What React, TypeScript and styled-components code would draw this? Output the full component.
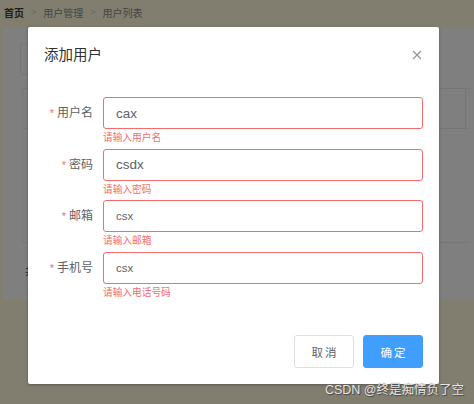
import React from 'react';
import styled, { createGlobalStyle } from 'styled-components';

const GlobalStyle = createGlobalStyle`
  html, body {
    margin: 0;
    padding: 0;
    background: #817d6f;
    font-family: "Helvetica Neue", "Liberation Sans", "Noto Sans CJK SC", sans-serif;
  }
`;

const Page = styled.div`
  position: relative;
  width: 474px;
  height: 404px;
  overflow: hidden;
`;

const Breadcrumb = styled.div`
  height: 28px;
  display: flex;
  align-items: center;
  gap: 7px;
  padding: 0 0 4px 4px;
  box-sizing: border-box;
  font-size: 10px;
  color: #3b3b3b;
`;

const Crumb = styled.span<{ strong?: boolean }>`
  font-weight: ${({ strong }) => (strong ? 700 : 400)};
  color: ${({ strong }) => (strong ? '#1e1e1e' : '#454545')};
`;

const Sep = styled.span`
  color: #6a6a6a;
  font-size: 9px;
`;

const Card = styled.div`
  margin-left: 3px;
  height: 272px;
  background: #7f7f7f;
  padding: 15px 0 0 17px;
  box-sizing: border-box;
`;

const SearchBox = styled.div`
  width: 260px;
  height: 32px;
  border: 1px solid #767676;
  border-radius: 3px;
  box-sizing: border-box;
`;

const Table = styled.div`
  margin: 13px 0 0 2px;
  width: 448px;
  height: 155px;
  border-top: 1px solid #777;
  border-bottom: 1px solid #777;
  border-left: 1px solid #7a7a7a;
  box-sizing: border-box;
`;

const TableHead = styled.div`
  height: 39px;
  border-bottom: 1px solid #777;
  display: flex;
  justify-content: flex-end;
`;

const HeadCell = styled.div`
  width: 4px;
  border-left: 1px solid #777;
`;

const Pager = styled.div`
  margin: 20px 0 0 5px;
  font-size: 10px;
  color: #262626;
`;

const Dialog = styled.div`
  position: absolute;
  left: 28px;
  top: 27px;
  width: 411px;
  height: 357px;
  background: #fff;
  border-radius: 2px;
  box-shadow: 0 1px 3px rgba(0, 0, 0, 0.3);
  display: flex;
  flex-direction: column;
`;

const Header = styled.div`
  padding: 18px 16px 8px;
  display: flex;
  align-items: center;
  justify-content: space-between;
`;

const Title = styled.span`
  font-size: 14.5px;
  line-height: 20px;
  color: #303133;
`;

const Close = styled.button`
  border: none;
  background: none;
  padding: 0;
  width: 10px;
  height: 10px;
  display: flex;
  margin-right: 1px;
  cursor: pointer;
`;

const Body = styled.div`
  padding: 24px 16px 0;
`;

const Row = styled.div`
  display: flex;
`;

const Label = styled.label`
  width: 59px;
  flex: none;
  padding-right: 10px;
  box-sizing: border-box;
  text-align: right;
  line-height: 32px;
  font-size: 12px;
  color: #606266;
  white-space: nowrap;
`;

const Star = styled.span`
  color: #f56c6c;
  margin-right: 3px;
  font-size: 11px;
`;

const Field = styled.div`
  flex: 1;
`;

const Input = styled.input<{ big?: boolean }>`
  display: block;
  width: 100%;
  height: 32px;
  box-sizing: border-box;
  border: 1px solid #f56c6c;
  border-radius: 3px;
  padding: 0 12px;
  outline: none;
  font-family: inherit;
  font-size: ${({ big }) => (big ? '13.5px' : '11.5px')};
  color: #606266;
  background: #fff;
`;

const Error = styled.div`
  height: 19.67px;
  line-height: 18px;
  font-size: 9.7px;
  color: #f56c6c;
`;

const Footer = styled.div`
  margin-top: auto;
  padding: 0 16px 16px;
  display: flex;
  justify-content: flex-end;
  gap: 9px;
`;

const Button = styled.button<{ primary?: boolean }>`
  width: 60px;
  height: 33px;
  border-radius: 3px;
  border: 1px solid ${({ primary }) => (primary ? '#409eff' : '#dcdfe6')};
  background: ${({ primary }) => (primary ? '#409eff' : '#fff')};
  color: ${({ primary }) => (primary ? '#fff' : '#606266')};
  font-family: inherit;
  font-size: 11.5px;
  letter-spacing: 2px;
  padding: 0 0 0 2px;
  cursor: pointer;
`;

const Watermark = styled.div`
  position: absolute;
  right: 10px;
  bottom: 6px;
  font-size: 12.5px;
  color: #e6e6e6;
  text-shadow: 0 0 1px #555, 1px 1px 1px #444;
  white-space: nowrap;
`;

const fields = [
  { label: '用户名', value: 'cax', error: '请输入用户名', big: true },
  { label: '密码', value: 'csdx', error: '请输入密码', big: true },
  { label: '邮箱', value: 'csx', error: '请输入邮箱', big: false },
  { label: '手机号', value: 'csx', error: '请输入电话号码', big: false },
];

export default function App() {
  return (
    <Page>
      <GlobalStyle />
      <Breadcrumb>
        <Crumb strong>首页</Crumb>
        <Sep>&gt;</Sep>
        <Crumb>用户管理</Crumb>
        <Sep>&gt;</Sep>
        <Crumb>用户列表</Crumb>
      </Breadcrumb>
      <Card>
        <SearchBox />
        <Table>
          <TableHead>
            <HeadCell />
          </TableHead>
        </Table>
        <Pager>共</Pager>
      </Card>

      <Dialog>
        <Header>
          <Title>添加用户</Title>
          <Close aria-label="关闭">
            <svg width="10" height="10" viewBox="0 0 10 10">
              <path d="M1 1 L9 9 M9 1 L1 9" stroke="#909399" strokeWidth="1.1" fill="none" />
            </svg>
          </Close>
        </Header>
        <Body>
          {fields.map((f) => (
            <Row key={f.label}>
              <Label>
                <Star>*</Star>
                {f.label}
              </Label>
              <Field>
                <Input big={f.big} defaultValue={f.value} />
                <Error>{f.error}</Error>
              </Field>
            </Row>
          ))}
        </Body>
        <Footer>
          <Button>取消</Button>
          <Button primary>确定</Button>
        </Footer>
      </Dialog>

      <Watermark>CSDN @终是痴情负了空</Watermark>
    </Page>
  );
}
